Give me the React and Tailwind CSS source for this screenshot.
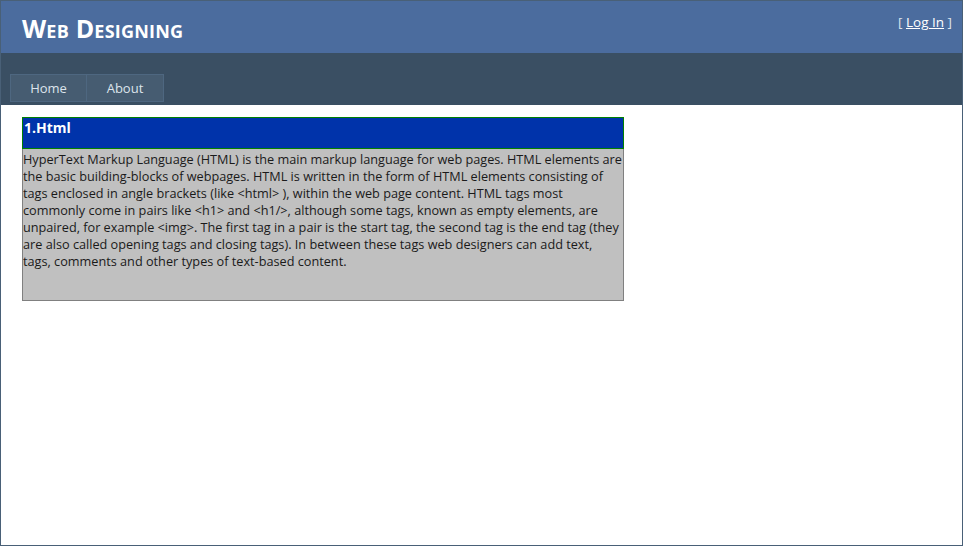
// App.jsx
export default function App() {
  return (
    <div
      className="w-[963px] h-[546px] bg-white border border-[#496077] flex flex-col overflow-hidden"
      style={{ fontFamily: '"Open Sans", "Liberation Sans", sans-serif' }}
    >
      {/* Header */}
      <div className="h-[52px] bg-[#4b6c9e] flex items-start justify-between shrink-0">
        <h1 className="pl-[21px] pt-[12px] text-white text-[25px] font-bold leading-[30px] [font-variant:small-caps] tracking-[0.2px]">
          Web Designing
        </h1>
        <div className="pr-[10px] pt-[11px] text-[13.5px] leading-[20px] text-[#dde4ec]">
          [ <a href="#" className="text-white underline">Log In</a> ]
        </div>
      </div>

      {/* Menu bar */}
      <div className="h-[52px] bg-[#3a4f63] flex items-end pl-[9px] pb-[3px] shrink-0">
        <div className="flex">
          <a href="#" className="w-[77px] h-[28px] flex items-center justify-center pt-[1px] bg-[#465c71] border border-[#4e6780] text-[13px] text-[#dde4ec]">
            Home
          </a>
          <a href="#" className="w-[77px] h-[28px] flex items-center justify-center pt-[1px] bg-[#465c71] border border-[#4e6780] border-l-0 text-[13px] text-[#dde4ec]">
            About
          </a>
        </div>
      </div>

      {/* Content */}
      <div className="pt-[12px] pl-[21px]">
        <div className="w-[602px]">
          <div className="h-[32px] bg-[#0033aa] border border-[#008000] px-[1px] pt-[1px]">
            <span className="block text-white text-[14px] leading-[18px] font-bold">1.Html</span>
          </div>
          <div className="h-[152px] bg-[#c0c0c0] border border-t-0 border-[#808080] text-[12.7px] leading-[17px] text-[#1a1a1a] pt-[2px] whitespace-nowrap overflow-hidden">
            HyperText Markup Language (HTML) is the main markup language for web pages. HTML elements are<br />
            the basic building-blocks of webpages. HTML is written in the form of HTML elements consisting of<br />
            tags enclosed in angle brackets (like &lt;html&gt; ), within the web page content. HTML tags most<br />
            commonly come in pairs like &lt;h1&gt; and &lt;h1/&gt;, although some tags, known as empty elements, are<br />
            unpaired, for example &lt;img&gt;. The first tag in a pair is the start tag, the second tag is the end tag (they<br />
            are also called opening tags and closing tags). In between these tags web designers can add text,<br />
            tags, comments and other types of text-based content.
          </div>
        </div>
      </div>
    </div>
  );
}
